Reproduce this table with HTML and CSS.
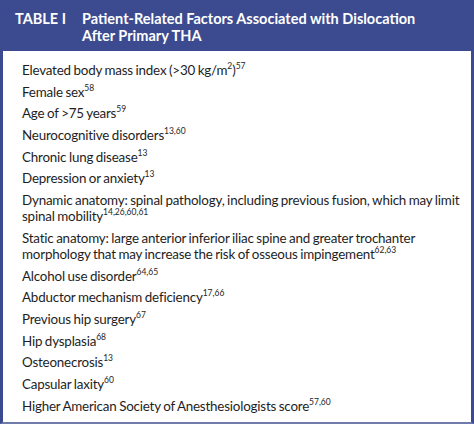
FILE: index.html
```html
<!DOCTYPE html>
<html>
<head>
<meta charset="utf-8">
<link rel="stylesheet" href="styles.css">
</head>
<body>
<div class="table">
  <div class="head">
    <div class="label">TABLE I</div>
    <div class="title">Patient-Related Factors Associated with Dislocation<br>After Primary THA</div>
  </div>
  <ul class="list">
    <li>Elevated body mass index (&gt;30 kg/m<sup class="sq">2</sup>)<sup>57</sup></li>
    <li>Female sex<sup>58</sup></li>
    <li>Age of &gt;75 years<sup>59</sup></li>
    <li>Neurocognitive disorders<sup>13,60</sup></li>
    <li>Chronic lung disease<sup>13</sup></li>
    <li>Depression or anxiety<sup>13</sup></li>
    <li>Dynamic anatomy: spinal pathology, including previous fusion, which may limit<br>spinal mobility<sup>14,26,60,61</sup></li>
    <li>Static anatomy: large anterior inferior iliac spine and greater trochanter<br>morphology that may increase the risk of osseous impingement<sup>62,63</sup></li>
    <li>Alcohol use disorder<sup>64,65</sup></li>
    <li>Abductor mechanism deficiency<sup>17,66</sup></li>
    <li>Previous hip surgery<sup>67</sup></li>
    <li>Hip dysplasia<sup>68</sup></li>
    <li>Osteonecrosis<sup>13</sup></li>
    <li>Capsular laxity<sup>60</sup></li>
    <li>Higher American Society of Anesthesiologists score<sup>57,60</sup></li>
  </ul>
</div>
</body>
</html>
```
FILE: styles.css
```css
html, body {
  margin: 0;
  padding: 0;
  background: #ffffff;
}
.table {
  width: 474px;
  height: 424px;
  display: flex;
  flex-direction: column;
  font-family: "Lato", "Open Sans", sans-serif;
}
.head {
  background: #3c4b8f;
  color: #ffffff;
  font-weight: 700;
  font-size: 14.5px;
  line-height: 17px;
  padding: 10px 15px 7px 15px;
  display: grid;
  grid-template-columns: 67px auto;
}
.list {
  flex: 1;
  margin: 0;
  list-style: none;
  padding: 11px 8px 0 19px;
  border-left: 3px solid #3c4b8f;
  border-right: 3px solid #3c4b8f;
  border-bottom: 2px solid #6f7cab;
  display: flex;
  flex-direction: column;
  gap: 5.7px;
  color: #1e1e1e;
  font-size: 13.4px;
  letter-spacing: -0.2px;
  word-spacing: -0.6px;
  line-height: 16px;
}
.list li {
  margin: 0;
  white-space: nowrap;
}
sup {
  font-size: 8.5px;
  line-height: 0;
  vertical-align: 6px;
  letter-spacing: 0;
  word-spacing: 0;
}
```
